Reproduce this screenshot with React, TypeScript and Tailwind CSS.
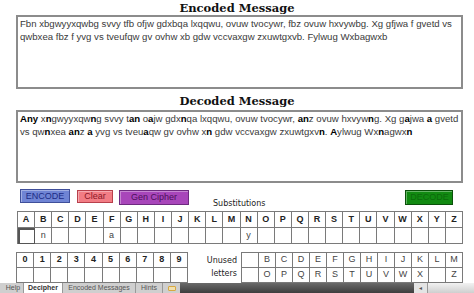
import React from "react";

const ENCODED =
  "Fbn xbgwyyxqwbg svvy tfb ofjw gdxbqa lxqqwu, ovuw tvocywr, fbz ovuw hxvywbg. Xg gfjwa f gvetd vs qwbxea fbz f yvg vs tveufqw gv ovhw xb gdw vccvaxgw zxuwtgxvb. Fylwug Wxbagwxb";

const SUBS: Record<string, string> = { b: "n", f: "a", n: "y" };

const ALPHA = "ABCDEFGHIJKLMNOPQRSTUVWXYZ".split("");
const DIGITS = "0123456789".split("");
const UNUSED_TOP = ["", "B", "C", "D", "E", "F", "G", "H", "I", "J", "K", "L", "M"];
const UNUSED_BOTTOM = ["", "O", "P", "Q", "R", "S", "T", "U", "V", "W", "X", "", "Z"];

const comic = { fontFamily: '"DejaVu Sans", sans-serif' };

function Decoded() {
  return (
    <>
      {ENCODED.split("").map((ch, i) => {
        const lower = ch.toLowerCase();
        const sub = SUBS[lower];
        if (!sub) return <span key={i}>{ch}</span>;
        return (
          <b key={i} className="font-bold text-black">
            {ch === lower ? sub : sub.toUpperCase()}
          </b>
        );
      })}
    </>
  );
}

function Title({ children }: { children: React.ReactNode }) {
  return (
    <div
      className="text-center text-[11.5px] font-bold leading-[14px] text-[#111]"
      style={{ fontFamily: '"DejaVu Serif", serif' }}
    >
      {children}
    </div>
  );
}

function Button({ label, className }: { label: string; className: string }) {
  return (
    <div
      className={`flex items-center justify-center border text-[9px] leading-none font-medium shadow-[inset_1px_1px_0_rgba(255,255,255,0.35)] ${className}`}
    >
      {label}
    </div>
  );
}

function CellRow({
  cells,
  cols,
  h,
  className,
}: {
  cells: string[];
  cols: string;
  h: string;
  className: string;
}) {
  return (
    <div className={`grid ${cols}`}>
      {cells.map((c, i) => (
        <div
          key={i}
          className={`flex items-center justify-center border-r border-b border-[#7a7a7a] ${h} ${className}`}
        >
          {c}
        </div>
      ))}
    </div>
  );
}

export default function App() {
  return (
    <div
      className="relative flex h-[293px] w-[474px] flex-col overflow-hidden bg-white text-[#333]"
      style={{ fontFamily: '"Liberation Sans", Arial, sans-serif' }}
    >
      <div className="mt-[1px]">
        <Title>Encoded Message</Title>
      </div>
      <div className="ml-[16px] h-[74px] w-[447px] border-2 border-[#8c8c8c] pl-[2px] text-[9.6px] leading-[13px] text-[#3a3a3a]">
        {ENCODED}
      </div>

      <div className="mt-[5px]">
        <Title>Decoded Message</Title>
      </div>
      <div className="ml-[16px] mt-[2px] h-[73px] w-[447px] border-2 border-[#8c8c8c] pl-[2px] text-[9.6px] leading-[13px] text-[#3a3a3a]">
        <Decoded />
      </div>

      {/* button row */}
      <div className="flex h-[28px] items-start">
        <Button
          label="ENCODE"
          className="ml-[20px] mt-[6px] h-[14px] w-[50px] border-[#3f4f9a] bg-[#6f84d4] text-[#1c2c86]"
        />
        <Button
          label="Clear"
          className="ml-[7px] mt-[7px] h-[13px] w-[36px] border-[#b8404c] bg-[#f27c84] text-[#8a1626]"
        />
        <Button
          label="Gen Cipher"
          className="ml-[6px] mt-[7px] h-[15px] w-[70px] border-[#6e2a80] bg-[#a846ba] text-[#4c0f5a]"
        />
        <div className="ml-[24px] mt-[16px] text-[8px] leading-[10px] text-[#222]" style={comic}>
          Substitutions
        </div>
        <Button
          label="DECODE"
          className="ml-[140px] mt-[7px] h-[15px] w-[48px] border-[#0a500a] bg-[#118a11] text-[#0b6a0b]"
        />
      </div>

      {/* substitution grid */}
      <div className="ml-[17px] w-[446px] border-l border-t border-[#7a7a7a]">
        <CellRow
          cells={ALPHA}
          cols="grid-cols-[repeat(26,minmax(0,1fr))]"
          h="h-[16px]"
          className="text-[9px] font-bold text-[#222]"
        />
        <div className="grid grid-cols-[repeat(26,minmax(0,1fr))]">
          {ALPHA.map((l, i) => {
            const sub = SUBS[l.toLowerCase()] ?? "";
            return (
              <div
                key={l}
                className={`flex h-[16px] items-center justify-center border-r border-b border-[#7a7a7a] text-[9px] text-[#444] ${
                  i === 0 ? "border-2 border-[#555]" : ""
                }`}
              >
                {sub}
              </div>
            );
          })}
        </div>
      </div>

      {/* numbers + unused letters */}
      <div className="mt-[8px] flex items-start">
        <div className="ml-[16px] w-[172px] border-l border-t border-[#7a7a7a]">
          <CellRow
            cells={DIGITS}
            cols="grid-cols-10"
            h="h-[15px]"
            className="text-[9px] font-bold text-[#222]"
          />
          <CellRow
            cells={DIGITS.map(() => "")}
            cols="grid-cols-10"
            h="h-[15px]"
            className=""
          />
        </div>
        <div
          className="ml-[17px] flex w-[32px] flex-col items-end pt-[2px] text-[8px] leading-[13px] text-[#222]"
          style={comic}
        >
          <span>Unused</span>
          <span>letters</span>
        </div>
        <div className="ml-[4px] w-[222px] border-l border-t border-[#7a7a7a]">
          <CellRow
            cells={UNUSED_TOP}
            cols="grid-cols-13"
            h="h-[15px]"
            className="text-[9px] text-[#444]"
          />
          <CellRow
            cells={UNUSED_BOTTOM}
            cols="grid-cols-13"
            h="h-[15px]"
            className="text-[9px] text-[#444]"
          />
        </div>
      </div>

      {/* sheet tabs */}
      <div className="mt-auto flex h-[10px] text-[7px] leading-[10px] text-[#555]">
        <div className="flex w-[180px] items-stretch bg-[#cfcfcf]">
          <div className="ml-[3px] w-[21px] border-r border-[#999] text-center">Help</div>
          <div className="w-[39px] border-r border-[#999] bg-white text-center font-bold text-[#333]">
            Decipher
          </div>
          <div className="w-[73px] border-r border-[#999] text-center">Encoded Messages</div>
          <div className="w-[27px] border-r border-[#999] text-center">Hints</div>
          <div className="flex w-[17px] items-center justify-center">
            <span className="h-[5px] w-[8px] rounded-[1px] border border-[#d8a840] bg-[#f0e0b0]" />
          </div>
        </div>
        <div className="w-[234px] bg-gradient-to-b from-[#6a6a6a] to-[#3e3e3e]" />
        <div className="flex w-[13px] items-center justify-center bg-[#e4e4e4] text-[6px] text-[#555]">
          ◂
        </div>
        <div className="flex-1 border-l border-[#999] bg-gradient-to-b from-[#f2f2f2] to-[#cfcfcf]" />
      </div>
    </div>
  );
}
